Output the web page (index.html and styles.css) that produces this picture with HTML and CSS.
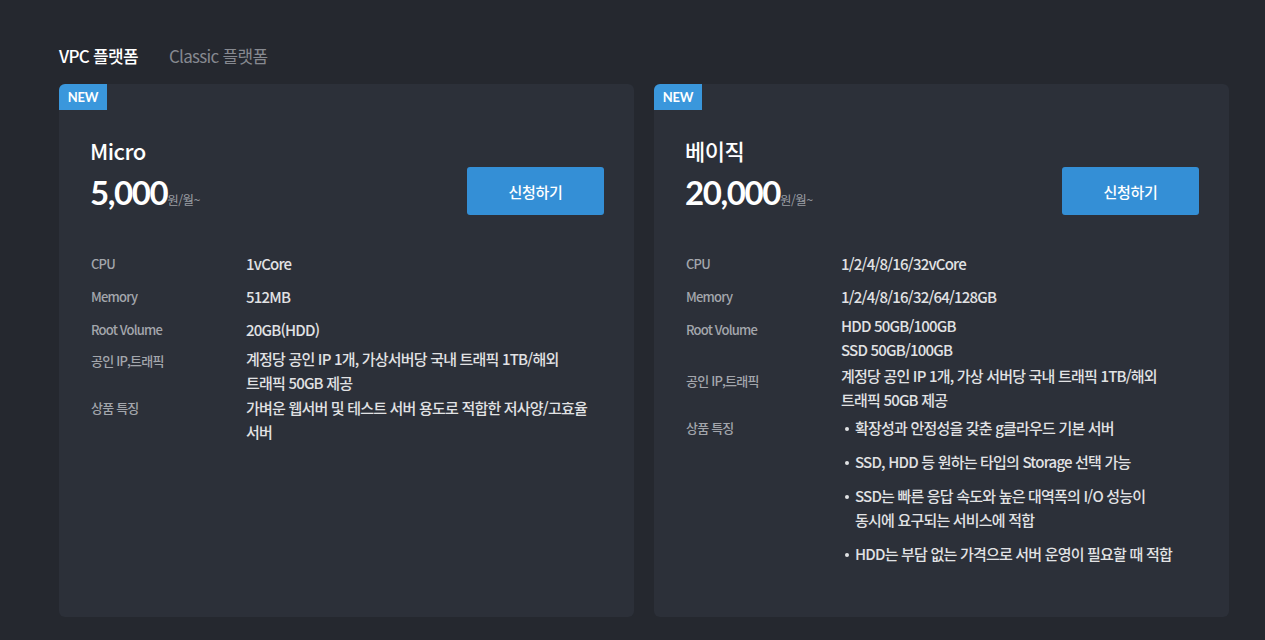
FILE: index.html
```html
<!DOCTYPE html>
<html lang="ko">
<head>
<meta charset="utf-8">
<link rel="stylesheet" href="styles.css">
</head>
<body>
<div class="wrap">
  <div class="tabs">
    <span class="tab active">VPC 플랫폼</span>
    <span class="tab">Classic 플랫폼</span>
  </div>
  <div class="cards">
    <section class="card">
      <span class="badge">NEW</span>
      <div class="head">
        <div class="title-box">
          <h2 class="title">Micro</h2>
          <div class="price"><span class="num">5,000</span><span class="unit">원/월~</span></div>
        </div>
        <button class="apply">신청하기</button>
      </div>
      <dl class="specs">
        <div class="row"><dt>CPU</dt><dd>1vCore</dd></div>
        <div class="row"><dt>Memory</dt><dd>512MB</dd></div>
        <div class="row short"><dt>Root Volume</dt><dd>20GB(HDD)</dd></div>
        <div class="row tight"><dt>공인 IP,트래픽</dt><dd>계정당 공인 IP 1개, 가상서버당 국내 트래픽 1TB/해외<br>트래픽 50GB 제공</dd></div>
        <div class="row"><dt>상품 특징</dt><dd>가벼운 웹서버 및 테스트 서버 용도로 적합한 저사양/고효율<br>서버</dd></div>
      </dl>
    </section>
    <section class="card">
      <span class="badge">NEW</span>
      <div class="head">
        <div class="title-box">
          <h2 class="title">베이직</h2>
          <div class="price"><span class="num">20,000</span><span class="unit">원/월~</span></div>
        </div>
        <button class="apply">신청하기</button>
      </div>
      <dl class="specs">
        <div class="row"><dt>CPU</dt><dd>1/2/4/8/16/32vCore</dd></div>
        <div class="row"><dt>Memory</dt><dd>1/2/4/8/16/32/64/128GB</dd></div>
        <div class="row root"><dt>Root Volume</dt><dd>HDD 50GB/100GB<br>SSD 50GB/100GB</dd></div>
        <div class="row"><dt class="mid">공인 IP,트래픽</dt><dd>계정당 공인 IP 1개, 가상 서버당 국내 트래픽 1TB/해외<br>트래픽 50GB 제공</dd></div>
        <div class="row feat"><dt>상품 특징</dt><dd>
          <ul class="bullets">
            <li>확장성과 안정성을 갖춘 g클라우드 기본 서버</li>
            <li class="wide">SSD, HDD 등 원하는 타입의 Storage 선택 가능</li>
            <li>SSD는 빠른 응답 속도와 높은 대역폭의 I/O 성능이<br>동시에 요구되는 서비스에 적합</li>
            <li>HDD는 부담 없는 가격으로 서버 운영이 필요할 때 적합</li>
          </ul>
        </dd></div>
      </dl>
    </section>
  </div>
</div>
</body>
</html>
```

FILE: styles.css
```css
* { box-sizing: border-box; }
html, body {
  margin: 0;
  padding: 0;
  background: #25282f;
  font-family: "Noto Sans CJK KR", "Noto Sans", sans-serif;
  color: #e1e2e4;
}
.wrap {
  padding: 43px 36px 0 59px;
}
.tabs {
  display: flex;
  gap: 31px;
  height: 41px;
}
.tab {
  font-size: 17px;
  line-height: 26px;
  color: #868990;
  letter-spacing: -0.7px;
}
.tab.active {
  color: #ffffff;
  font-weight: 500;
}
.cards {
  display: flex;
  gap: 20px;
}
.card {
  position: relative;
  width: 575px;
  height: 533px;
  background: #2c3039;
  border-radius: 6px;
  padding: 52px 30px 0 31px;
}
.badge {
  position: absolute;
  left: 0;
  top: 0;
  width: 48px;
  height: 26px;
  background: #3a97dc;
  border-top-left-radius: 6px;
  color: #fff;
  font-family: "Lato", "Noto Sans", sans-serif;
  font-weight: 700;
  font-size: 13px;
  line-height: 26px;
  text-align: center;
  letter-spacing: -0.3px;
}
.head {
  display: flex;
  justify-content: space-between;
  align-items: flex-end;
}
.title {
  margin: 0;
  font-size: 22px;
  line-height: 28px;
  font-weight: 500;
  color: #fff;
  letter-spacing: -0.5px;
}
.price {
  margin-top: 6px;
  height: 44px;
  display: flex;
  align-items: baseline;
}
.num {
  font-family: "Lato", "Noto Sans", sans-serif;
  font-weight: 700;
  font-size: 33px;
  line-height: 44px;
  color: #fff;
  letter-spacing: -1.4px;
}
.unit {
  font-size: 12.5px;
  color: #9a9da3;
  letter-spacing: -0.6px;
}
.apply {
  width: 137px;
  height: 48px;
  margin-bottom: -1px;
  background: #348fd6;
  border: 0;
  border-radius: 3px;
  color: #fff;
  font-family: "Noto Sans CJK KR", sans-serif;
  font-size: 15px;
  font-weight: 500;
  letter-spacing: -0.3px;
}
.specs {
  margin: 38px 0 0;
}
.row {
  display: flex;
  min-height: 33px;
}
.row.short {
  min-height: 29px;
}
.row.tight {
  min-height: 0;
  margin-bottom: 1px;
}
.row.root {
  margin-top: -4px;
  margin-bottom: 2px;
}
.row dt {
  width: 155px;
  flex: none;
  font-size: 13px;
  line-height: 24px;
  font-weight: 500;
  color: #a3a6ac;
  letter-spacing: -0.8px;
  padding-left: 1px;
}
.row.root dt {
  padding-top: 4px;
}
.row.tight dt {
  padding-top: 2px;
}
.row dt.mid {
  padding-top: 5px;
}
.row dd {
  margin: 0 0 0 1px;
  font-size: 15px;
  line-height: 24px;
  font-weight: 500;
  color: #e1e2e4;
  letter-spacing: -0.8px;
}
.row.feat {
  margin-top: 4px;
}
.bullets {
  list-style: none;
  margin: 0;
  padding: 0;
}
.bullets li {
  position: relative;
  padding-left: 14px;
  margin-bottom: 10px;
}
.bullets li.wide {
  margin-top: 1px;
}
.bullets li::before {
  content: "";
  position: absolute;
  left: 4px;
  top: 11px;
  width: 4px;
  height: 4px;
  border-radius: 50%;
  background: #e1e2e4;
}
```
